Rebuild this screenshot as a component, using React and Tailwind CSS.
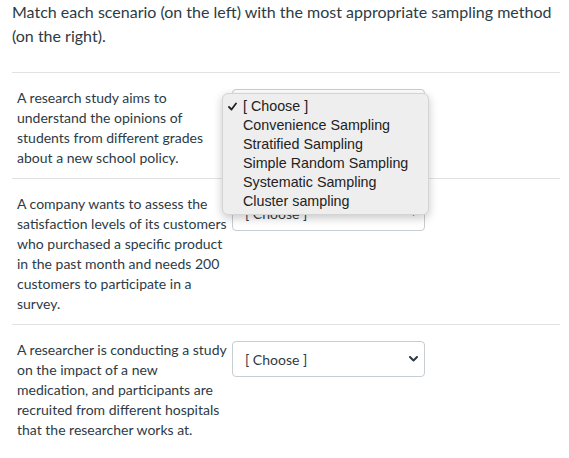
import React from "react";

function Chevron() {
  return (
    <svg width="9" height="6" viewBox="0 0 9 6" className="block">
      <path d="M1 1 L4.5 4.5 L8 1" fill="none" stroke="#2d3b45" strokeWidth="2" strokeLinecap="round" strokeLinejoin="round" />
    </svg>
  );
}

function SelectBox() {
  return (
    <div className="mt-px w-[193px] h-[36px] shrink-0 border border-[#c7cdd1] rounded-[4px] bg-white flex items-center justify-between pl-[12px] pr-[6px] text-[14px] text-[#2d3b45]">
      <span>[ Choose ]</span>
      <Chevron />
    </div>
  );
}

function Row({ lines }) {
  return (
    <div className="border-t border-[#e0e2e4] ml-3 w-[548px] pl-[5px] pt-[15px] pb-[10px] flex gap-[5px]">
      <div className="w-[210px] shrink-0 text-[14px] leading-[20px]">
        {lines.map((l, i) => (
          <div key={i} className="whitespace-nowrap">{l}</div>
        ))}
      </div>
      <SelectBox />
    </div>
  );
}

export default function App() {
  const options = [
    "[ Choose ]",
    "Convenience Sampling",
    "Stratified Sampling",
    "Simple Random Sampling",
    "Systematic Sampling",
    "Cluster sampling",
  ];
  return (
    <div className="relative w-[569px] h-[458px] bg-white text-[#2d3b45] font-['Lato',sans-serif]">
      <div className="px-3 text-[16px] leading-[24px]">
        <div className="whitespace-nowrap">Match each scenario (on the left) with the most appropriate sampling method</div>
        <div>(on the right).</div>
      </div>
      <div className="h-[24px]" />
      <Row
        lines={[
          "A research study aims to",
          "understand the opinions of",
          "students from different grades",
          "about a new school policy.",
        ]}
      />
      <Row
        lines={[
          "A company wants to assess the",
          "satisfaction levels of its customers",
          "who purchased a specific product",
          "in the past month and needs 200",
          "customers to participate in a",
          "survey.",
        ]}
      />
      <Row
        lines={[
          "A researcher is conducting a study",
          "on the impact of a new",
          "medication, and participants are",
          "recruited from different hospitals",
          "that the researcher works at.",
        ]}
      />

      <div className="absolute left-[222px] top-[93px] w-[207px] h-[122px] rounded-[6px] bg-[#eeeeee] border border-[#d4d4d4] shadow-[0_3px_10px_rgba(0,0,0,0.22)] py-[3px] font-['Liberation_Sans',Arial,sans-serif] text-[14.3px] leading-[19px] text-[#222222]">
        {options.map((o, i) => (
          <div key={o} className="flex items-center h-[19px]">
            <div className="w-[20px] flex justify-start pl-[5px]">
              {i === 0 && (
                <svg width="9" height="9" viewBox="0 0 9 9" className="block">
                  <path d="M1 5 L3.5 7.5 L8 1.5" fill="none" stroke="#222" strokeWidth="1.8" strokeLinecap="round" strokeLinejoin="round" />
                </svg>
              )}
            </div>
            <span className="whitespace-nowrap">{o}</span>
          </div>
        ))}
      </div>
    </div>
  );
}
